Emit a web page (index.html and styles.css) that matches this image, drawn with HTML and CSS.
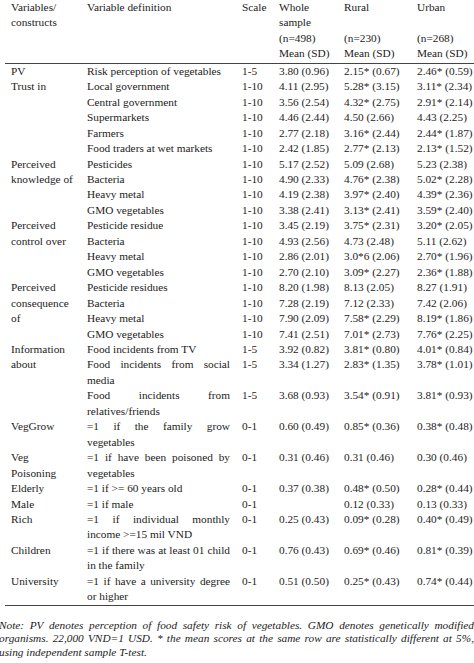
FILE: index.html
```html
<!DOCTYPE html>
<html>
<head>
<meta charset="utf-8">
<link rel="stylesheet" href="styles.css">
</head>
<body>
<div class="tbl">
<div class="hd">Variables/ constructs</div>
<div class="hd">Variable definition</div>
<div class="hd">Scale</div>
<div class="hd">Whole sample<br>(n=498)<br>Mean (SD)</div>
<div class="hd">Rural<br><br>(n=230)<br>Mean (SD)</div>
<div class="hd">Urban<br><br>(n=268)<br>Mean (SD)</div>

<div class="cat">PV</div><div class="def">Risk perception of vegetables</div><div>1-5</div><div>3.80 (0.96)</div><div>2.15* (0.67)</div><div>2.46* (0.59)</div>
<div class="cat s5">Trust in</div><div class="def">Local government</div><div>1-10</div><div>4.11 (2.95)</div><div>5.28* (3.15)</div><div>3.11* (2.34)</div>
<div class="def">Central government</div><div>1-10</div><div>3.56 (2.54)</div><div>4.32* (2.75)</div><div>2.91* (2.14)</div>
<div class="def">Supermarkets</div><div>1-10</div><div>4.46 (2.44)</div><div>4.50 (2.66)</div><div>4.43 (2.25)</div>
<div class="def">Farmers</div><div>1-10</div><div>2.77 (2.18)</div><div>3.16* (2.44)</div><div>2.44* (1.87)</div>
<div class="def">Food traders at wet markets</div><div>1-10</div><div>2.42 (1.85)</div><div>2.77* (2.13)</div><div>2.13* (1.52)</div>
<div class="cat s4">Perceived knowledge of</div><div class="def">Pesticides</div><div>1-10</div><div>5.17 (2.52)</div><div>5.09 (2.68)</div><div>5.23 (2.38)</div>
<div class="def">Bacteria</div><div>1-10</div><div>4.90 (2.33)</div><div>4.76* (2.38)</div><div>5.02* (2.28)</div>
<div class="def">Heavy metal</div><div>1-10</div><div>4.19 (2.38)</div><div>3.97* (2.40)</div><div>4.39* (2.36)</div>
<div class="def">GMO vegetables</div><div>1-10</div><div>3.38 (2.41)</div><div>3.13* (2.41)</div><div>3.59* (2.40)</div>
<div class="cat s4">Perceived control over</div><div class="def">Pesticide residue</div><div>1-10</div><div>3.45 (2.19)</div><div>3.75* (2.31)</div><div>3.20* (2.05)</div>
<div class="def">Bacteria</div><div>1-10</div><div>4.93 (2.56)</div><div>4.73 (2.48)</div><div>5.11 (2.62)</div>
<div class="def">Heavy metal</div><div>1-10</div><div>2.86 (2.01)</div><div>3.0*6 (2.06)</div><div>2.70* (1.96)</div>
<div class="def">GMO vegetables</div><div>1-10</div><div>2.70 (2.10)</div><div>3.09* (2.27)</div><div>2.36* (1.88)</div>
<div class="cat s4">Perceived consequence of</div><div class="def">Pesticide residues</div><div>1-10</div><div>8.20 (1.98)</div><div>8.13 (2.05)</div><div>8.27 (1.91)</div>
<div class="def">Bacteria</div><div>1-10</div><div>7.28 (2.19)</div><div>7.12 (2.33)</div><div>7.42 (2.06)</div>
<div class="def">Heavy metal</div><div>1-10</div><div>7.90 (2.09)</div><div>7.58* (2.29)</div><div>8.19* (1.86)</div>
<div class="def">GMO vegetables</div><div>1-10</div><div>7.41 (2.51)</div><div>7.01* (2.73)</div><div>7.76* (2.25)</div>
<div class="cat s3">Information about</div><div class="def">Food incidents from TV</div><div>1-5</div><div>3.92 (0.82)</div><div>3.81* (0.80)</div><div>4.01* (0.84)</div>
<div class="def">Food incidents from social media</div><div>1-5</div><div>3.34 (1.27)</div><div>2.83* (1.35)</div><div>3.78* (1.01)</div>
<div class="def">Food incidents from relatives/friends</div><div>1-5</div><div>3.68 (0.93)</div><div>3.54* (0.91)</div><div>3.81* (0.93)</div>
<div class="cat">VegGrow</div><div class="def">=1 if the family grow vegetables</div><div>0-1</div><div>0.60 (0.49)</div><div>0.85* (0.36)</div><div>0.38* (0.48)</div>
<div class="cat">Veg Poisoning</div><div class="def">=1 if have been poisoned by vegetables</div><div>0-1</div><div>0.31 (0.46)</div><div>0.31 (0.46)</div><div>0.30 (0.46)</div>
<div class="cat">Elderly</div><div class="def">=1 if &gt;= 60 years old</div><div>0-1</div><div>0.37 (0.38)</div><div>0.48* (0.50)</div><div>0.28* (0.44)</div>
<div class="cat">Male</div><div class="def">=1 if male</div><div>0-1</div><div></div><div>0.12 (0.33)</div><div>0.13 (0.33)</div>
<div class="cat">Rich</div><div class="def">=1 if individual monthly income &gt;=15 mil VND</div><div>0-1</div><div>0.25 (0.43)</div><div>0.09* (0.28)</div><div>0.40* (0.49)</div>
<div class="cat">Children</div><div class="def">=1 if there was at least 01 child in the family</div><div>0-1</div><div>0.76 (0.43)</div><div>0.69* (0.46)</div><div>0.81* (0.39)</div>
<div class="cat">University</div><div class="def">=1 if have a university degree or higher</div><div>0-1</div><div>0.51 (0.50)</div><div>0.25* (0.43)</div><div>0.74* (0.44)</div>
</div>
<p class="note">Note: PV denotes perception of food safety risk of vegetables. GMO denotes genetically modified organisms. 22,000 VND=1 USD. * the mean scores at the same row are statistically different at 5%, using independent sample T-test.</p>
</body>
</html>
```
FILE: styles.css
```css
html, body {
  margin: 0;
  padding: 0;
  background: #fff;
  overflow: hidden;
}
body {
  width: 474px;
  height: 663px;
  font-family: "Liberation Serif", "Times New Roman", serif;
  font-size: 11.3px;
  line-height: 15.45px;
  color: #1c1c1c;
}
.tbl {
  display: grid;
  grid-template-columns: 70px 155px 37px 65px 73px 63px;
  margin-left: 5px;
  width: 469px;
  padding-left: 6px;
  border-bottom: 1.5px solid #444;
  box-sizing: border-box;
  width: 475px;
}
.tbl > div {
  white-space: nowrap;
  padding-left: 6px;
}
.tbl > div.cat {
  grid-column: 1;
  white-space: normal;
  padding-left: 0;
  padding-right: 6px;
}
.tbl > div.def {
  grid-column: 2;
  white-space: normal;
  text-align: justify;
  padding-right: 6px;
}
.s5 { grid-row: span 5; }
.s4 { grid-row: span 4; }
.s3 { grid-row: span 3; }
.tbl > div.hd {
  white-space: normal;
  border-bottom: 1.5px solid #444;
  padding-bottom: 1px;
  margin-bottom: 0;
}
.tbl > div.hd:first-child {
  padding-left: 0;
  margin-left: -6px;
  padding-left: 6px;
  padding-right: 6px;
}
.note {
  margin: 13px 0 0 -1px;
  width: 475px;
  font-style: italic;
  font-size: 11.3px;
  line-height: 13.6px;
  text-align: justify;
}
```
